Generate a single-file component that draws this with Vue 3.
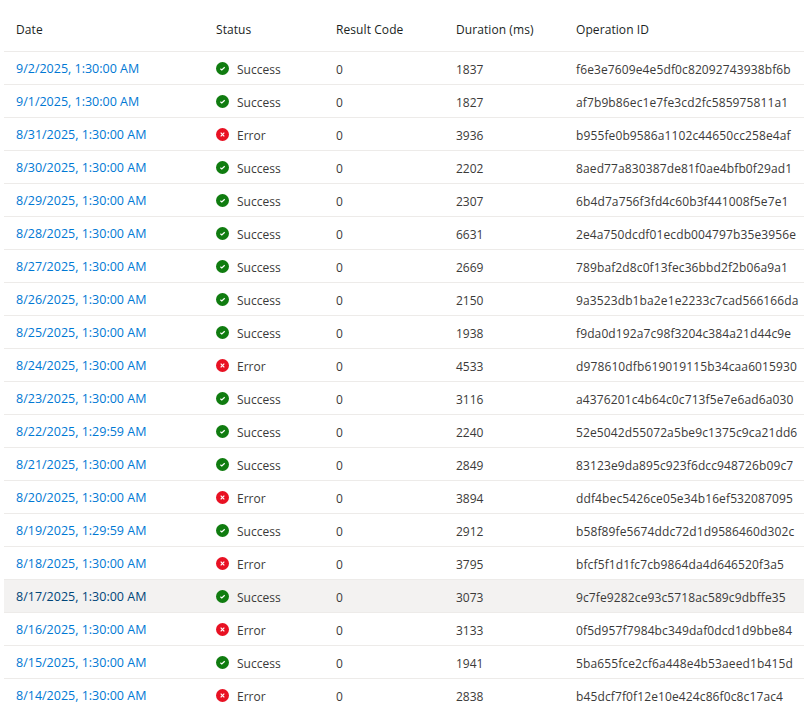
<script setup>
const rows = [
  ["9/2/2025, 1:30:00 AM", "Success", 1837, "f6e3e7609e4e5df0c82092743938bf6b"],
  ["9/1/2025, 1:30:00 AM", "Success", 1827, "af7b9b86ec1e7fe3cd2fc585975811a1"],
  ["8/31/2025, 1:30:00 AM", "Error", 3936, "b955fe0b9586a1102c44650cc258e4af"],
  ["8/30/2025, 1:30:00 AM", "Success", 2202, "8aed77a830387de81f0ae4bfb0f29ad1"],
  ["8/29/2025, 1:30:00 AM", "Success", 2307, "6b4d7a756f3fd4c60b3f441008f5e7e1"],
  ["8/28/2025, 1:30:00 AM", "Success", 6631, "2e4a750dcdf01ecdb004797b35e3956e"],
  ["8/27/2025, 1:30:00 AM", "Success", 2669, "789baf2d8c0f13fec36bbd2f2b06a9a1"],
  ["8/26/2025, 1:30:00 AM", "Success", 2150, "9a3523db1ba2e1e2233c7cad566166da"],
  ["8/25/2025, 1:30:00 AM", "Success", 1938, "f9da0d192a7c98f3204c384a21d44c9e"],
  ["8/24/2025, 1:30:00 AM", "Error", 4533, "d978610dfb619019115b34caa6015930"],
  ["8/23/2025, 1:30:00 AM", "Success", 3116, "a4376201c4b64c0c713f5e7e6ad6a030"],
  ["8/22/2025, 1:29:59 AM", "Success", 2240, "52e5042d55072a5be9c1375c9ca21dd6"],
  ["8/21/2025, 1:30:00 AM", "Success", 2849, "83123e9da895c923f6dcc948726b09c7"],
  ["8/20/2025, 1:30:00 AM", "Error", 3894, "ddf4bec5426ce05e34b16ef532087095"],
  ["8/19/2025, 1:29:59 AM", "Success", 2912, "b58f89fe5674ddc72d1d9586460d302c"],
  ["8/18/2025, 1:30:00 AM", "Error", 3795, "bfcf5f1d1fc7cb9864da4d646520f3a5"],
  ["8/17/2025, 1:30:00 AM", "Success", 3073, "9c7fe9282ce93c5718ac589c9dbffe35"],
  ["8/16/2025, 1:30:00 AM", "Error", 3133, "0f5d957f7984bc349daf0dcd1d9bbe84"],
  ["8/15/2025, 1:30:00 AM", "Success", 1941, "5ba655fce2cf6a448e4b53aeed1b415d"],
  ["8/14/2025, 1:30:00 AM", "Error", 2838, "b45dcf7f0f12e10e424c86f0c8c17ac4"],
];
const hoveredIndex = 16;
</script>

<template>
  <div class="page">
    <div class="row head">
      <div>Date</div>
      <div>Status</div>
      <div>Result Code</div>
      <div>Duration (ms)</div>
      <div>Operation ID</div>
    </div>
    <div v-for="(row, i) in rows" :key="row[3]" class="row" :class="{ hovered: i === hoveredIndex }">
      <a class="date">{{ row[0] }}</a>
      <div class="status">
        <svg v-if="row[1] === 'Success'" class="icon" viewBox="0 0 13 13">
          <circle cx="6.5" cy="6.5" r="6.5" fill="#107c10" />
          <path d="M4.4 6.7 5.8 7.9 8.7 5.2" fill="none" stroke="#fff" stroke-width="1.2" />
        </svg>
        <svg v-else class="icon" viewBox="0 0 13 13">
          <circle cx="6.5" cy="6.5" r="6.5" fill="#e81123" />
          <path d="M4.7 4.7 8.3 8.3M8.3 4.7 4.7 8.3" fill="none" stroke="#fff" stroke-width="1.2" />
        </svg>
        <span>{{ row[1] }}</span>
      </div>
      <div>0</div>
      <div>{{ row[2] }}</div>
      <div class="op-id">{{ row[3] }}</div>
    </div>
  </div>
</template>

<style>
body {
  background: #fff;
  overflow: hidden;
}
</style>

<style scoped>
.page {
  height: 705px;
  overflow: hidden;
  padding-left: 4px;
  font-family: "Open Sans", "Liberation Sans", sans-serif;
  font-size: 12px;
  color: #3b3a39;
}

.row {
  display: grid;
  grid-template-columns: 200px 120px 120px 120px 1fr;
  height: 33px;
  box-sizing: border-box;
  align-items: center;
  border-bottom: 1px solid #edebe9;
}

.row > * {
  padding-left: 12px;
  padding-top: 2px;
  white-space: nowrap;
}

.head {
  height: 52px;
  font-weight: 500;
  letter-spacing: 0.08px;
  color: #201f1e;
}

.row.head > * {
  padding-top: 8px;
}

.row > .date {
  padding-top: 0;
  font-size: 12.5px;
  color: #0078d4;
}

.status {
  display: flex;
  align-items: center;
  gap: 8px;
}

.icon {
  width: 13px;
  height: 13px;
  flex: none;
  margin-top: -2px;
}

.op-id {
  letter-spacing: 0.12px;
}

.hovered {
  background: #f3f2f1;
}

.row.hovered > .date {
  color: #004578;
}
</style>
